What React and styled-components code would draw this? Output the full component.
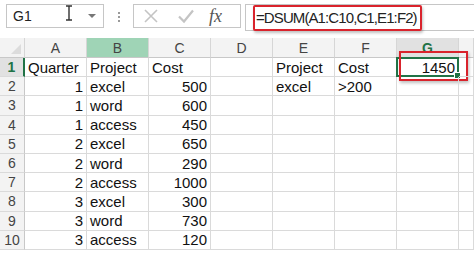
import React from "react";
import styled, { createGlobalStyle } from "styled-components";

const GlobalStyle = createGlobalStyle`
  html, body {
    margin: 0;
    padding: 0;
    background: #ffffff;
    overflow: hidden;
  }
  body {
    font-family: "Liberation Sans", Arial, sans-serif;
  }
`;

const green = "#217346";

const Page = styled.div`
  width: 474px;
  height: 253px;
  overflow: hidden;
  background: #fff;
`;

const Toolbar = styled.div`
  display: flex;
  align-items: flex-start;
  height: 38px;
  padding: 4px 0 0 6px;
  box-sizing: border-box;
`;

const NameBox = styled.div`
  position: relative;
  display: flex;
  align-items: center;
  width: 98px;
  height: 24px;
  box-sizing: border-box;
  border: 1px solid #c6c6c6;
  padding-left: 6px;
  font-size: 14px;
  color: #222;
`;

const Caret = styled.span`
  margin-left: auto;
  margin-right: 7px;
  width: 0;
  height: 0;
  border-left: 4px solid transparent;
  border-right: 4px solid transparent;
  border-top: 4px solid #777;
`;

const Cursor = styled.svg`
  position: absolute;
  left: 57px;
  top: 0px;
`;

const Grip = styled.div`
  width: 29px;
  display: flex;
  flex-direction: column;
  align-items: center;
  gap: 2px;
  padding-top: 8px;
  span {
    width: 2px;
    height: 2px;
    background: #9a9a9a;
  }
`;

const FxBox = styled.div`
  display: flex;
  align-items: center;
  width: 108px;
  height: 24px;
  box-sizing: border-box;
  border: 1px solid #c6c6c6;
  padding-left: 9px;
  gap: 18px;
`;

const Fx = styled.span`
  font-family: "Liberation Serif", "Times New Roman", serif;
  font-style: italic;
  font-size: 18px;
  color: #555;
  margin-left: -4px;
`;

const FormulaBox = styled.div`
  flex: 1;
  margin-left: 4px;
  height: 27px;
  box-sizing: border-box;
  border: 1px solid #c6c6c6;
  border-right: none;
  padding: 0 0 0 7px;
  display: flex;
  align-items: center;
`;

const FormulaText = styled.span`
  border: 2px solid #d9232c;
  border-radius: 2px;
  padding: 2px 3px 2px 1px;
  font-family: "Liberation Sans", Arial, sans-serif;
  font-size: 15px;
  letter-spacing: -0.9px;
  color: #222;
  box-shadow: 1px 2px 3px rgba(0, 0, 0, 0.25);
  line-height: 18px;
`;

const Grid = styled.div`
  display: grid;
  grid-template-columns: 25px repeat(7, 62px) 1fr;
  grid-auto-rows: 19.2px;
  grid-template-rows: 20px;
`;

const Corner = styled.div`
  background: #f3f3f3;
  border-right: 1px solid #d6d6d6;
  border-bottom: 1px solid #c8c8c8;
  position: relative;
  &::after {
    content: "";
    position: absolute;
    right: 3px;
    bottom: 3px;
    width: 0;
    height: 0;
    border-left: 10px solid transparent;
    border-bottom: 10px solid #dcdcdc;
  }
`;

const ColHead = styled.div`
  display: flex;
  align-items: center;
  justify-content: center;
  font-size: 14px;
  color: ${(p) => (p.$active ? green : "#444")};
  font-weight: ${(p) => (p.$active ? "bold" : "normal")};
  background: ${(p) => (p.$hl ? "#9fd4b6" : p.$active ? "#e1e1e1" : "#f3f3f3")};
  border-right: 1px solid #d6d6d6;
  border-bottom: 1px solid ${(p) => (p.$active ? green : "#c8c8c8")};
  box-sizing: border-box;
`;

const RowHead = styled.div`
  display: flex;
  align-items: center;
  justify-content: center;
  font-size: 14px;
  color: ${(p) => (p.$active ? green : "#444")};
  font-weight: ${(p) => (p.$active ? "bold" : "normal")};
  background: ${(p) => (p.$active ? "#e1e1e1" : "#f3f3f3")};
  border-right: ${(p) => (p.$active ? `2px solid ${green}` : "1px solid #c8c8c8")};
  border-bottom: 1px solid #dadada;
  box-sizing: border-box;
`;

const Cell = styled.div`
  position: relative;
  display: flex;
  align-items: center;
  justify-content: ${(p) => (p.$num ? "flex-end" : "flex-start")};
  padding: 0 3px 0 3px;
  font-size: 15px;
  color: #111;
  border-right: 1px solid #dadada;
  border-bottom: 1px solid #dadada;
  box-sizing: border-box;
  white-space: nowrap;
`;

const Selection = styled.div`
  position: absolute;
  left: -1px;
  top: -1px;
  right: -1px;
  bottom: -1px;
  border: 2px solid ${green};
  pointer-events: none;
  &::after {
    content: "";
    position: absolute;
    right: -4px;
    bottom: -4px;
    width: 5px;
    height: 5px;
    background: ${green};
    border: 1px solid #fff;
  }
`;

const Callout = styled.div`
  position: absolute;
  left: 2px;
  top: -7px;
  right: -10px;
  bottom: -5px;
  border: 2px solid #d9232c;
  box-shadow: 1px 2px 3px rgba(0, 0, 0, 0.25);
  pointer-events: none;
`;

const cols = ["A", "B", "C", "D", "E", "F", "G", ""];

const rows = [
  [["Quarter"], ["Project"], ["Cost"], [""], ["Project"], ["Cost"], ["1450", true, "sel"], [""]],
  [["1", true], ["excel"], ["500", true], [""], ["excel"], [">200"], [""], [""]],
  [["1", true], ["word"], ["600", true], [""], [""], [""], [""], [""]],
  [["1", true], ["access"], ["450", true], [""], [""], [""], [""], [""]],
  [["2", true], ["excel"], ["650", true], [""], [""], [""], [""], [""]],
  [["2", true], ["word"], ["290", true], [""], [""], [""], [""], [""]],
  [["2", true], ["access"], ["1000", true], [""], [""], [""], [""], [""]],
  [["3", true], ["excel"], ["300", true], [""], [""], [""], [""], [""]],
  [["3", true], ["word"], ["730", true], [""], [""], [""], [""], [""]],
  [["3", true], ["access"], ["120", true], [""], [""], [""], [""], [""]],
];

export default function App() {
  return (
    <Page>
      <GlobalStyle />
      <Toolbar>
        <NameBox>
          G1
          <Cursor width="10" height="16" viewBox="0 0 10 16">
            <path d="M2 1h6M5 1v14M2 15h6" stroke="#333" strokeWidth="1.4" fill="none" />
          </Cursor>
          <Caret />
        </NameBox>
        <Grip>
          <span />
          <span />
          <span />
        </Grip>
        <FxBox>
          <svg width="16" height="16" viewBox="0 0 16 16">
            <path d="M2 2L14 14M14 2L2 14" stroke="#c4c4c4" strokeWidth="1.6" fill="none" />
          </svg>
          <svg width="18" height="16" viewBox="0 0 18 16">
            <path d="M2 8.5L7 13.5L16 2.5" stroke="#c4c4c4" strokeWidth="2.2" fill="none" />
          </svg>
          <Fx>fx</Fx>
        </FxBox>
        <FormulaBox>
          <FormulaText>=DSUM(A1:C10,C1,E1:F2)</FormulaText>
        </FormulaBox>
      </Toolbar>
      <Grid>
        <Corner />
        {cols.map((c, k) => (
          <ColHead key={k} $hl={c === "B"} $active={c === "G"}>
            {c}
          </ColHead>
        ))}
        {rows.map((r, i) => (
          <React.Fragment key={i}>
            <RowHead $active={i === 0}>{i + 1}</RowHead>
            {r.map(([v, num, sel], j) => (
              <Cell key={j} $num={num}>
                {v}
                {sel && <Selection />}
                {sel && <Callout />}
              </Cell>
            ))}
          </React.Fragment>
        ))}
      </Grid>
    </Page>
  );
}
